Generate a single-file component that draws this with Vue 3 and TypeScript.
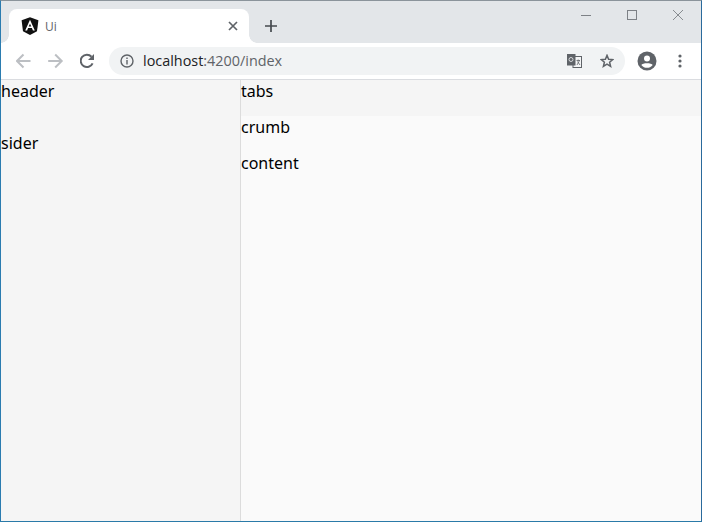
<script setup lang="ts">
const sections: string[] = ['crumb', 'content']
</script>

<template>
  <div class="window">
    <div class="strip">
      <div class="tab">
        <svg class="favicon" width="18" height="18" viewBox="0 0 18 18">
          <path d="M9 0.3 L17.4 3.2 L16 14.2 L9 18 L2 14.2 L0.6 3.2 Z" fill="#111" />
          <path d="M9 2.8 L4.2 13.5 H6.1 L7.1 11 H10.9 L11.9 13.5 H13.8 Z M9 6.8 L10.3 9.6 H7.7 Z" fill="#fff" fill-rule="evenodd" />
        </svg>
        <span class="tab-title">Ui</span>
        <svg class="tab-close" width="10" height="10" viewBox="0 0 10 10">
          <path d="M1 1 L9 9 M9 1 L1 9" stroke="#5f6368" stroke-width="1.7" />
        </svg>
      </div>
      <svg class="new-tab" width="12" height="12" viewBox="0 0 12 12">
        <path d="M6 0 V12 M0 6 H12" stroke="#45494e" stroke-width="1.7" />
      </svg>
      <div class="controls">
        <svg width="10" height="10" viewBox="0 0 10 10"><path d="M0 5.5 H10" stroke="#7d8186" stroke-width="1" /></svg>
        <svg width="10" height="10" viewBox="0 0 10 10"><rect x="0.5" y="0.5" width="9" height="9" fill="none" stroke="#7d8186" /></svg>
        <svg width="10" height="10" viewBox="0 0 10 10"><path d="M0 0 L10 10 M10 0 L0 10" stroke="#7d8186" stroke-width="0.9" /></svg>
      </div>
    </div>

    <div class="toolbar">
      <svg class="nav" width="16" height="16" viewBox="0 0 16 16">
        <path d="M15 8 H2 M8 1.5 L1.5 8 L8 14.5" fill="none" stroke="#bcbfc3" stroke-width="2" transform="translate(-0.5 0)" />
      </svg>
      <svg class="nav" width="16" height="16" viewBox="0 0 16 16">
        <path d="M1 8 H14 M8 1.5 L14.5 8 L8 14.5" fill="none" stroke="#bcbfc3" stroke-width="2" transform="translate(-0.8 0)" />
      </svg>
      <svg class="nav" width="16" height="16" viewBox="0 0 16 16">
        <path d="M13.6 10.4 A6.2 6.2 0 1 1 12.5 3.7" fill="none" stroke="#5f6368" stroke-width="2" transform="translate(-1 0)" />
        <path d="M14 1 V7 H8 Z" fill="#5f6368" />
      </svg>
      <div class="omnibox">
        <svg width="14" height="14" viewBox="0 0 14 14">
          <circle cx="7" cy="7" r="6" fill="none" stroke="#5f6368" stroke-width="1.4" />
          <path d="M7 6 V10.5 M7 3.4 V5" stroke="#5f6368" stroke-width="1.4" />
        </svg>
        <span class="url"><span class="host">localhost</span>:4200/index</span>
        <svg class="translate" width="15" height="14" viewBox="0 0 15 14">
          <rect x="6" y="2.5" width="8.5" height="11" fill="#f4f5f6" stroke="#5f6368" stroke-width="1" />
          <path d="M0 0 H8.5 V11.5 H0 Z" fill="#5f6368" />
          <circle cx="4" cy="5.5" r="2" fill="none" stroke="#d5d7da" stroke-width="1" />
          <path d="M9.5 6.5 H13 M11.2 5.5 V6.5 M10 11 L12.5 6.5 M10.5 7.5 L13 11" fill="none" stroke="#5f6368" stroke-width="0.8" />
        </svg>
        <svg class="star" width="14" height="14" viewBox="0 0 14 14">
          <path d="M7 1.4 L8.6 5.3 L12.8 5.6 L9.6 8.3 L10.6 12.4 L7 10.2 L3.4 12.4 L4.4 8.3 L1.2 5.6 L5.4 5.3 Z" fill="none" stroke="#5f6368" stroke-width="1.5" />
        </svg>
      </div>
      <svg class="avatar" width="20" height="20" viewBox="0 0 20 20">
        <circle cx="10" cy="10" r="9.5" fill="#5f6368" />
        <circle cx="10" cy="7.5" r="3" fill="#fff" />
        <path d="M4.3 14 C5.5 11.6 14.5 11.6 15.7 14 C14.2 16 12 16.8 10 16.8 C8 16.8 5.8 16 4.3 14 Z" fill="#fff" />
      </svg>
      <svg class="menu" width="4" height="14" viewBox="0 0 4 14">
        <circle cx="2" cy="2" r="1.6" fill="#5f6368" />
        <circle cx="2" cy="7" r="1.6" fill="#5f6368" />
        <circle cx="2" cy="12" r="1.6" fill="#5f6368" />
      </svg>
    </div>

    <div class="page">
      <aside class="side">
        <div class="header">header</div>
        <div class="line">sider</div>
      </aside>
      <main class="main">
        <div class="tabs">tabs</div>
        <div v-for="s in sections" :key="s" class="section">{{ s }}</div>
      </main>
    </div>
  </div>
</template>

<style scoped>
.window {
  width: 702px;
  height: 522px;
  box-sizing: border-box;
  display: flex;
  flex-direction: column;
  border-left: 1px solid #2b7cb0;
  border-right: 1px solid #2a6a9c;
  border-bottom: 1px solid #2a7aa8;
  border-top: 1px solid #8b949b;
  overflow: hidden;
  background: #fff;
}
.strip {
  height: 42px;
  flex: none;
  display: flex;
  align-items: flex-end;
  background: #e3e6e9;
  padding-left: 8px;
}
.tab {
  position: relative;
  width: 240px;
  height: 34px;
  box-sizing: border-box;
  display: flex;
  align-items: center;
  padding: 0 11px 0 11.5px;
  background: #fff;
  border-radius: 8px 8px 0 0;
}
.tab::before,
.tab::after {
  content: "";
  position: absolute;
  bottom: 0;
  width: 8px;
  height: 8px;
}
.tab::before {
  left: -8px;
  background: radial-gradient(circle at 0 0, #e3e6e9 7.5px, #fff 8px);
}
.tab::after {
  right: -8px;
  background: radial-gradient(circle at 100% 0, #e3e6e9 7.5px, #fff 8px);
}
.favicon {
  flex: none;
}
.tab-title {
  margin: 2px 0 0 6.5px;
  flex: 1;
  font: 12px/16px "Open Sans", "Noto Sans", sans-serif;
  color: #5f6368;
}
.new-tab {
  margin: 0 0 11px 16px;
}
.controls {
  margin-left: auto;
  align-self: flex-start;
  display: flex;
  gap: 36px;
  padding: 9px 18px 0 0;
}
.toolbar {
  height: 36px;
  flex: none;
  display: flex;
  align-items: center;
  padding-left: 15px;
  border-bottom: 1px solid #dadce0;
  background: #fff;
}
.nav {
  margin-right: 16px;
}
.omnibox {
  width: 516px;
  height: 28px;
  box-sizing: border-box;
  margin-left: -3px;
  display: flex;
  align-items: center;
  padding: 0 11px;
  background: #f1f3f4;
  border-radius: 14px;
}
.url {
  margin-left: 9px;
  flex: 1;
  font: 14.4px/18px "Open Sans", "Noto Sans", sans-serif;
  color: #5f6368;
}
.host {
  color: #202124;
}
.translate {
  margin-right: 18px;
}
.avatar {
  margin-left: 12px;
}
.menu {
  margin-left: 21px;
}
.page {
  flex: 1;
  min-height: 0;
  display: flex;
  font: 16px/22px "Noto Sans", "Open Sans", sans-serif;
  color: #000;
}
.side {
  width: 240px;
  flex: none;
  box-sizing: border-box;
  background: #f5f5f5;
  border-right: 1px solid #dcdcdc;
}
.header {
  height: 52px;
}
.main {
  flex: 1;
  background: #fafafa;
}
.tabs {
  height: 36px;
  background: #f5f5f5;
}
.section {
  height: 36px;
}
</style>
